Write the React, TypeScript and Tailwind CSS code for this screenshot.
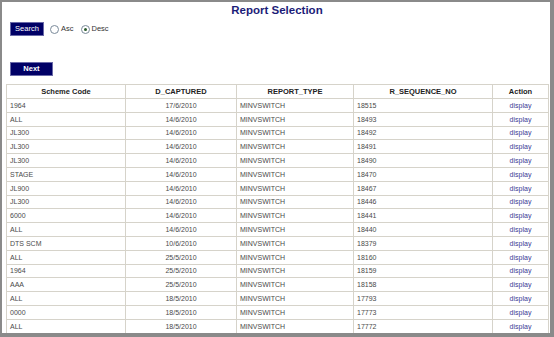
import { useState } from 'react';

type Row = {
  scheme: string;
  captured: string;
  type: string;
  seq: string;
};

const rows: Row[] = [
  { scheme: '1964', captured: '17/6/2010', type: 'MINVSWITCH', seq: '18515' },
  { scheme: 'ALL', captured: '14/6/2010', type: 'MINVSWITCH', seq: '18493' },
  { scheme: 'JL300', captured: '14/6/2010', type: 'MINVSWITCH', seq: '18492' },
  { scheme: 'JL300', captured: '14/6/2010', type: 'MINVSWITCH', seq: '18491' },
  { scheme: 'JL300', captured: '14/6/2010', type: 'MINVSWITCH', seq: '18490' },
  { scheme: 'STAGE', captured: '14/6/2010', type: 'MINVSWITCH', seq: '18470' },
  { scheme: 'JL900', captured: '14/6/2010', type: 'MINVSWITCH', seq: '18467' },
  { scheme: 'JL300', captured: '14/6/2010', type: 'MINVSWITCH', seq: '18446' },
  { scheme: '6000', captured: '14/6/2010', type: 'MINVSWITCH', seq: '18441' },
  { scheme: 'ALL', captured: '14/6/2010', type: 'MINVSWITCH', seq: '18440' },
  { scheme: 'DTS SCM', captured: '10/6/2010', type: 'MINVSWITCH', seq: '18379' },
  { scheme: 'ALL', captured: '25/5/2010', type: 'MINVSWITCH', seq: '18160' },
  { scheme: '1964', captured: '25/5/2010', type: 'MINVSWITCH', seq: '18159' },
  { scheme: 'AAA', captured: '25/5/2010', type: 'MINVSWITCH', seq: '18158' },
  { scheme: 'ALL', captured: '18/5/2010', type: 'MINVSWITCH', seq: '17793' },
  { scheme: '0000', captured: '18/5/2010', type: 'MINVSWITCH', seq: '17773' },
  { scheme: 'ALL', captured: '18/5/2010', type: 'MINVSWITCH', seq: '17772' },
];

function Radio({ checked, label, onClick }: { checked: boolean; label: string; onClick: () => void }) {
  return (
    <label className="flex items-center gap-[2px] cursor-pointer" onClick={onClick}>
      <span className="w-[9px] h-[9px] rounded-full border border-[#7a8a9a] bg-white flex items-center justify-center">
        {checked && <span className="w-[3px] h-[3px] rounded-full bg-[#2a5a2a]" />}
      </span>
      <span className="text-[7.5px] text-[#333]">{label}</span>
    </label>
  );
}

export default function App() {
  const [order, setOrder] = useState<'asc' | 'desc'>('desc');

  return (
    <div
      className="w-[554px] h-[337px] bg-white border-l-2 border-t-2 border-r-[4px] border-b-[4px] border-[#8a8a8a] overflow-hidden"
      style={{ fontFamily: '"Liberation Sans", Arial, sans-serif' }}
    >
      <div className="pl-[4px] pr-[2px]">
        <h1 className="text-center text-[11.5px] font-bold text-[#1c1c78] leading-[14px] pt-[1px]">
          Report Selection
        </h1>

        <div className="flex items-center gap-[6px] mt-[5px] pl-[4px]">
          <button className="w-[34px] h-[14px] bg-[#000066] border border-[#6a6aa8] text-white text-[7.5px] leading-none">
            Search
          </button>
          <div className="flex items-center gap-[7px]">
            <Radio checked={order === 'asc'} label="Asc" onClick={() => setOrder('asc')} />
            <Radio checked={order === 'desc'} label="Desc" onClick={() => setOrder('desc')} />
          </div>
        </div>

        <div className="pl-[4px] mt-[18px]">
          <button className="w-[43px] h-[14px] bg-[#000066] border border-[#6a6aa8] text-white text-[7.5px] font-bold leading-none">
            Next
          </button>
        </div>

        <table className="mt-[6px] w-[542px] border-collapse border border-[#b8b6ae] table-fixed text-[7px]">
          <colgroup>
            <col className="w-[119px]" />
            <col className="w-[111px]" />
            <col className="w-[117px]" />
            <col className="w-[139px]" />
            <col className="w-[56px]" />
          </colgroup>
          <thead>
            <tr className="h-[14px]">
              {['Scheme Code', 'D_CAPTURED', 'REPORT_TYPE', 'R_SEQUENCE_NO', 'Action'].map((h) => (
                <th key={h} className="border border-[#d6d3ca] font-bold text-[7.5px] text-[#222] text-center p-0 leading-none">
                  {h}
                </th>
              ))}
            </tr>
          </thead>
          <tbody>
            {rows.map((r, i) => (
              <tr key={i} className="h-[13.8px] text-[#4a4a4a]">
                <td className="border border-[#d6d3ca] px-[3px] py-0 leading-none">{r.scheme}</td>
                <td className="border border-[#d6d3ca] text-center p-0 leading-none">{r.captured}</td>
                <td className="border border-[#d6d3ca] px-[3px] py-0 leading-none">{r.type}</td>
                <td className="border border-[#d6d3ca] px-[3px] py-0 leading-none">{r.seq}</td>
                <td className="border border-[#d6d3ca] text-center p-0 leading-none">
                  <a href="#" className="text-[#3a3a96]">display</a>
                </td>
              </tr>
            ))}
          </tbody>
        </table>
      </div>
    </div>
  );
}
